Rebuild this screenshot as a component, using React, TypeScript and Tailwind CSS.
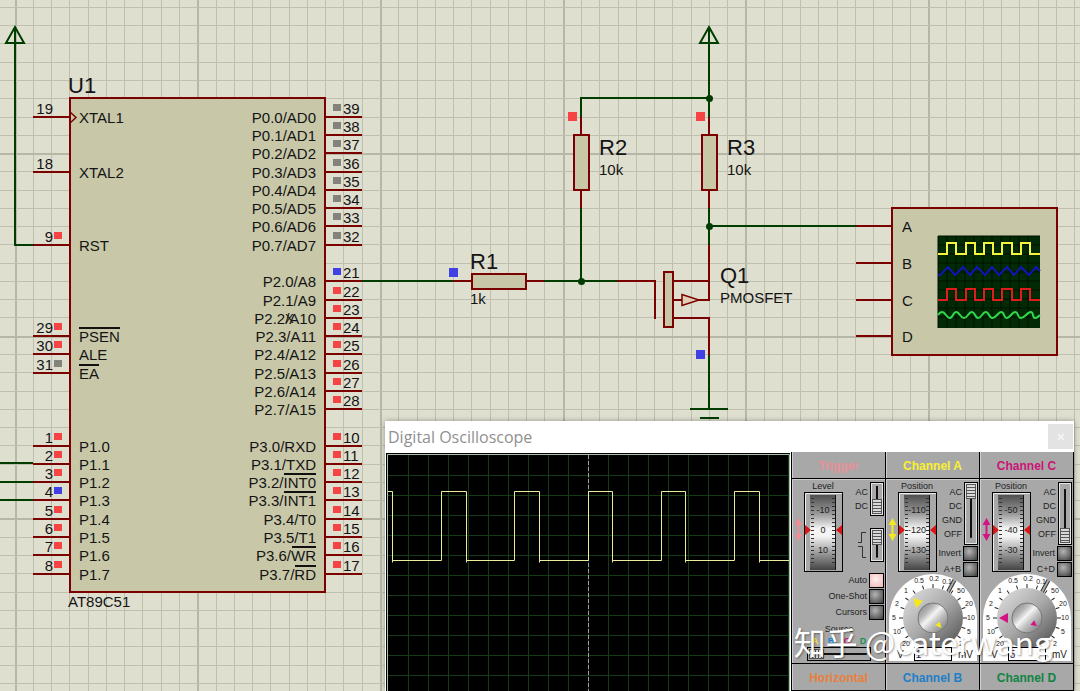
import { ReactNode } from "react";
import { X } from "lucide-react";

type Level = "high" | "low" | "float";
type Pin = { num: number; name: string; row: number; level?: Level; bar?: number };

const WIRE = "#003c00";
const PART = "#7b0000";
const BODY = "#c8c8a9";
const LEVELS: Record<Level, string> = { high: "#f64343", low: "#4040e4", float: "#83837b" };

const LEFT_PINS: Pin[] = [
  { num: 19, name: "XTAL1", row: 0 },
  { num: 18, name: "XTAL2", row: 3 },
  { num: 9, name: "RST", row: 7, level: "high" },
  { num: 29, name: "PSEN", row: 12, level: "high", bar: 41 },
  { num: 30, name: "ALE", row: 13, level: "high" },
  { num: 31, name: "EA", row: 14, level: "float", bar: 20 },
  { num: 1, name: "P1.0", row: 18, level: "high" },
  { num: 2, name: "P1.1", row: 19, level: "high" },
  { num: 3, name: "P1.2", row: 20, level: "high" },
  { num: 4, name: "P1.3", row: 21, level: "low" },
  { num: 5, name: "P1.4", row: 22, level: "high" },
  { num: 6, name: "P1.5", row: 23, level: "high" },
  { num: 7, name: "P1.6", row: 24, level: "high" },
  { num: 8, name: "P1.7", row: 25, level: "high" },
];

const RIGHT_PINS: Pin[] = [
  { num: 39, name: "P0.0/AD0", row: 0, level: "float" },
  { num: 38, name: "P0.1/AD1", row: 1, level: "float" },
  { num: 37, name: "P0.2/AD2", row: 2, level: "float" },
  { num: 36, name: "P0.3/AD3", row: 3, level: "float" },
  { num: 35, name: "P0.4/AD4", row: 4, level: "float" },
  { num: 34, name: "P0.5/AD5", row: 5, level: "float" },
  { num: 33, name: "P0.6/AD6", row: 6, level: "float" },
  { num: 32, name: "P0.7/AD7", row: 7, level: "float" },
  { num: 21, name: "P2.0/A8", row: 9, level: "low" },
  { num: 22, name: "P2.1/A9", row: 10, level: "high" },
  { num: 23, name: "P2.2/A10", row: 11, level: "high" },
  { num: 24, name: "P2.3/A11", row: 12, level: "high" },
  { num: 25, name: "P2.4/A12", row: 13, level: "high" },
  { num: 26, name: "P2.5/A13", row: 14, level: "high" },
  { num: 27, name: "P2.6/A14", row: 15, level: "high" },
  { num: 28, name: "P2.7/A15", row: 16, level: "high" },
  { num: 10, name: "P3.0/RXD", row: 18, level: "high" },
  { num: 11, name: "P3.1/TXD", row: 19, level: "high" },
  { num: 12, name: "P3.2/INT0", row: 20, level: "high", bar: 32 },
  { num: 13, name: "P3.3/INT1", row: 21, level: "high", bar: 32 },
  { num: 14, name: "P3.4/T0", row: 22, level: "high" },
  { num: 15, name: "P3.5/T1", row: 23, level: "high" },
  { num: 16, name: "P3.6/WR", row: 24, level: "high", bar: 24 },
  { num: 17, name: "P3.7/RD", row: 25, level: "high", bar: 21 },
];

const rowY = (row: number) => Math.round(116.8 + row * 18.27);

function GridLines() {
  const columns = Array.from({ length: 140 }, (_, i) => i);
  const rows = Array.from({ length: 90 }, (_, i) => i);
  return (
    <g shapeRendering="crispEdges">
      {columns.map((i) => {
        const major = i % 10 === 0;
        return (
          <rect key={i} x={Math.round(14.6 + i * 18.27)} y="0" width={major ? 2 : 1} height="100%" fill={major ? "#b7b7a8" : "#bfbfb0"} />
        );
      })}
      {rows.map((i) => {
        const major = i % 10 === 8;
        return (
          <rect key={i} x="0" y={Math.round(6.9 + i * 18.27)} width="100%" height={major ? 2 : 1} fill={major ? "#b7b7a8" : "#bfbfb0"} />
        );
      })}
    </g>
  );
}

function Chip() {
  return (
    <g>
      <rect x="70" y="98" width="255" height="494" fill={BODY} stroke={PART} strokeWidth="2" />
      <path d="M70 112l6 5.500-6 5.500" fill="none" stroke={PART} strokeWidth="1.500" />
      {LEFT_PINS.map((pin) => {
        const y = rowY(pin.row);
        return (
          <g key={pin.num}>
            <path d={`M33 ${y}H70`} stroke={PART} strokeWidth="2" />
            <text x="53" y={y - 3} textAnchor="end">{pin.num}</text>
            <text x="79" y={y + 6}>{pin.name}</text>
            {pin.level && <rect x="54" y={y - 13} width="8" height="7" fill={LEVELS[pin.level]} />}
            {pin.bar && <path d={`M79 ${y - 8}h${pin.bar}`} stroke="#111" strokeWidth="2" />}
          </g>
        );
      })}
      {RIGHT_PINS.map((pin) => {
        const y = rowY(pin.row);
        return (
          <g key={pin.num}>
            <path d={`M325 ${y}H362`} stroke={PART} strokeWidth="2" />
            <text x="343" y={y - 3}>{pin.num}</text>
            <text x="316" y={y + 6} textAnchor="end">{pin.name}</text>
            {pin.level && <rect x="333" y={y - 13} width="8" height="7" fill={LEVELS[pin.level]} />}
            {pin.bar && <path d={`M316 ${y - 8}h-${pin.bar}`} stroke="#111" strokeWidth="2" />}
          </g>
        );
      })}
      <text x="285" y="323" className="text-[13px]">X</text>
      <text x="68" y="93" className="text-[22px]">U1</text>
      <text x="68" y="607">AT89C51</text>
    </g>
  );
}

function Wires() {
  return (
    <g>
      <g fill="none" stroke={WIRE} strokeWidth="2">
        <path d="M15 27V245H33M15 27l9 16H6z" />
        <path d="M709 27V117M709 27l9 16h-18z" />
        <path d="M0 463h33M0 482h33M0 500h33" />
        <path d="M362 281h91M544 281h73M581 208v73M581 117V98h128" />
        <path d="M709 208v37M709 226h147M709 355v54M690 409h38M700 418h19" />
      </g>
      <g fill="none" stroke={PART} strokeWidth="2">
        <path d="M453 281h18M526 281h18M617 281h38v38" />
        <path d="M581 117v18M581 190v18M709 117v18M709 190v18" />
        <path d="M709 245v55h-36M673 281h36M673 318h36v37" />
        <path d="M682 294.500v11l17-5.500z" fill="#e2cdb5" strokeWidth="1.500" />
        <g fill={BODY}>
          <rect x="472" y="274" width="54" height="15" />
          <rect x="574" y="135" width="15" height="55" />
          <rect x="702" y="135" width="15" height="55" />
          <rect x="664" y="272" width="9" height="55" />
        </g>
      </g>
      <g fill={WIRE}>
        <circle cx="709.500" cy="98.500" r="3.500" />
        <circle cx="709.500" cy="226.500" r="3.500" />
        <circle cx="581.500" cy="281.500" r="3.500" />
      </g>
      <rect x="568" y="112" width="9" height="9" fill={LEVELS.high} />
      <rect x="696" y="112" width="9" height="9" fill={LEVELS.high} />
      <rect x="449" y="268" width="9" height="9" fill={LEVELS.low} />
      <rect x="696" y="350" width="9" height="9" fill={LEVELS.low} />
      <g className="text-[22px]">
        <text x="599" y="155">R2</text>
        <text x="727" y="155">R3</text>
        <text x="470" y="269">R1</text>
        <text x="720" y="283">Q1</text>
      </g>
      <text x="599" y="175">10k</text>
      <text x="727" y="175">10k</text>
      <text x="470" y="304">1k</text>
      <text x="720" y="303">PMOSFET</text>
    </g>
  );
}

const SQUARE = "h9v-11h9v11h10v-11h9v11h9v-11h9v11h9v-11h10v11h9v-11h9v11h10";
const ZIGZAG = "l2 0 8-8 7 8 8-8 7 8 7-8 8 8 7-8 7 8 8-8 7 8 7-8 8 8 7-8 4 4";
const SINE = "q4-6 8 0t7 0 7 0 8 0 7 0 7 0 7 0 8 0 7 0 7 0 7 0 8 0 7 0 7 0";

function ScopePart() {
  const cells = Array.from({ length: 11 }, (_, i) => 938 + i * 9);
  const lines = Array.from({ length: 10 }, (_, i) => 236 + i * 9);
  return (
    <g>
      <rect x="892" y="208" width="165" height="147" fill={BODY} stroke={PART} strokeWidth="2" />
      {["A", "B", "C", "D"].map((name, i) => (
        <g key={name}>
          <path d={`M856 ${rowY(6 + i * 2)}h36`} stroke={PART} strokeWidth="2" />
          <text x="902" y={rowY(6 + i * 2) + 6}>{name}</text>
        </g>
      ))}
      <rect x="938" y="236" width="102" height="92" fill="#022b05" />
      <g stroke="#001000">
        {cells.map((x) => <path key={x} d={`M${x} 236v92`} />)}
        {lines.map((y) => <path key={y} d={`M938 ${y}h102`} />)}
      </g>
      <g fill="none" strokeWidth="2">
        <path d={`M938 254${SQUARE}`} stroke="#f4f43c" />
        <path d={`M938 275${ZIGZAG}`} stroke="#1414b4" />
        <path d={`M938 300${SQUARE}`} stroke="#e01c1c" />
        <path d={`M938 315${SINE}`} stroke="#30d84c" />
      </g>
    </g>
  );
}

function Schematic() {
  return (
    <svg className="block h-full w-full text-[15px]" fill="#141414" role="img" aria-label="Schematic">
      <GridLines />
      <Chip />
      <Wires />
      <ScopePart />
    </svg>
  );
}

function Plot() {
  const steps = Array.from({ length: 20 }, (_, i) => 22 + i * 20);
  return (
    <svg className="block h-full w-full bg-black" role="img" aria-label="Trace">
      <g stroke="#153a18" shapeRendering="crispEdges">
        {steps.map((x) => <path key={x} d={`M${x}.5 2v800`} />)}
        {steps.map((y) => <path key={y} d={`M2 ${y}.5h401`} />)}
      </g>
      <path d="M202.500 2v800" stroke="#a0a0a0" strokeDasharray="4 2" />
      <path
        d="M2 38.500h4.500v71M6.500 107.500h49v-69h25v71M80.500 107.500h48v-69h25v71M153.500 107.500h49v-69h24v71M226.500 107.500h49v-69h24v71M299.500 107.500h49v-69h25v71M373.500 107.500h30"
        fill="none"
        stroke="#ecec9a"
      />
      <path d="M1.500 900V1.500h402v900" fill="none" stroke="#a9c0a9" />
    </svg>
  );
}

function Wheel({ marks, unit }: { marks: [string, string, string]; unit: string }) {
  const ticks = Array.from({ length: 17 }, (_, i) => 5 + i * 4);
  return (
    <div className="flex w-10 flex-col items-center">
      <span className="h-[13px] leading-[15px]">{unit}</span>
      <svg width="39" height="80" className="block" role="img" aria-label={`${unit} ${marks[1]}`}>
        <defs>
          <linearGradient id="wheel" x1="0" y1="0" x2="0" y2="1">
            <stop offset="0" stopColor="#505050" />
            <stop offset="0.250" stopColor="#999" />
            <stop offset="0.450" stopColor="#f4f4f4" />
            <stop offset="0.550" stopColor="#f4f4f4" />
            <stop offset="0.780" stopColor="#999" />
            <stop offset="1" stopColor="#444" />
          </linearGradient>
        </defs>
        <rect x="0.500" y="0.500" width="38" height="79" fill="#a8a8a8" stroke="#000" />
        <path d="M1.500 79V1.500H38" fill="none" stroke="#eee" />
        <rect x="6" y="3" width="26" height="75" fill="url(#wheel)" />
        <path d="M31.500 3v75" stroke="#111" />
        <g stroke="#333">
          {ticks.map((y) => <path key={y} d={`M7 ${y + 1}.500h3M28 ${y + 1}.500h3`} />)}
        </g>
        <path d="M1 33l6 5-6 5zM38 33l-6 5 6 5z" fill="#dc1414" />
        <g fill="#222" textAnchor="middle" className="text-[9px]">
          <text x="19" y="21">{marks[0]}</text>
          <text x="19" y="41">{marks[1]}</text>
          <text x="19" y="61">{marks[2]}</text>
        </g>
      </svg>
    </div>
  );
}

function DragArrow({ color }: { color: string }) {
  return (
    <svg width="10" height="24" className="mt-[39px] block" fill={color} aria-hidden="true">
      <path d="M5.500 0l4 7h-3v9h3l-4 7-4-7h3V7h-3z" />
    </svg>
  );
}

function Slide({ label, max, value, tall }: { label: string; max: number; value: number; tall?: boolean }) {
  return (
    <input
      type="range"
      aria-label={label}
      min={0}
      max={max}
      defaultValue={value}
      className={`m-0 block w-[14px] appearance-none border border-black bg-[#a8a8a8] bg-[linear-gradient(#111,#111)] bg-[length:2px_80%] bg-center bg-no-repeat p-px outline-1 -outline-offset-2 outline-[#e4e4e4] [writing-mode:vertical-lr] [&::-webkit-slider-thumb]:h-[15px] [&::-webkit-slider-thumb]:w-[10px] [&::-webkit-slider-thumb]:appearance-none [&::-webkit-slider-thumb]:border [&::-webkit-slider-thumb]:border-[#555] [&::-webkit-slider-thumb]:bg-[repeating-linear-gradient(#d8d8d8_0_2px,#555_2px_3px)] ${
        tall ? "h-[63px]" : "h-[34px]"
      }`}
    />
  );
}

function PushButton({ label, lit }: { label: string; lit?: boolean }) {
  return (
    <button type="button" className="flex h-4 items-center justify-end gap-[2px] leading-4">
      {label}
      <span
        className={`h-[15px] w-[15px] border border-black ${
          lit
            ? "bg-[radial-gradient(circle_at_45%_40%,#fff0f0,#f0b4b4)]"
            : "bg-[radial-gradient(circle_at_40%_35%,#b4b4b4,#3c3c3c)]"
        }`}
      />
    </button>
  );
}

function Panel({ title, titleClass, footer, footerClass, children }: { title: string; titleClass: string; footer: string; footerClass: string; children: ReactNode }) {
  return (
    <section className="flex w-[94px] flex-col border-l border-black bg-[#a8a8a8] shadow-[inset_1px_0_#d4ccd8]">
      <h2 className={`h-[27px] border-b border-black text-center text-xs leading-[29px] font-bold ${titleClass}`}>{title}</h2>
      <div className="h-[185px] border-b border-black pl-px shadow-[inset_0_1px_#ccc]">{children}</div>
      <h2 className={`h-[27px] border-b border-black text-center text-xs leading-[28px] font-bold ${footerClass}`}>{footer}</h2>
    </section>
  );
}

const DIAL_MARKS: [string, number, number][] = [
  ["20", -27, 26], ["10", -36, 14], ["5", -39, 0], ["2", -36, -14], ["1", -27, -27], ["0.5", -14, -37], ["0.2", 1, -39],
  ["0.1", 14, -36], ["50", 28, -27], ["20", 36, -14], ["10", 38, 0], ["5", 36, 14], ["2", 28, 26],
];

function Dial({ name, color, angle, fineAngle, value }: { name: string; color: string; angle: number; fineAngle: number; value: string }) {
  const ticks = Array.from({ length: 15 }, (_, i) => -126 + i * 18);
  return (
    <div className="relative -mt-1">
      <svg width="92" height="88" className="block" role="img" aria-label={`${name} volts per division`}>
        <defs>
          <linearGradient id="knob" x1="0" y1="0" x2="1" y2="1">
            <stop offset="0.100" stopColor="#d8d8d8" />
            <stop offset="0.500" stopColor="#a8a8a8" />
            <stop offset="0.900" stopColor="#5c5c5c" />
          </linearGradient>
          <linearGradient id="cap" x1="0" y1="0" x2="1" y2="1">
            <stop offset="0.100" stopColor="#8c8c8c" />
            <stop offset="0.300" stopColor="#b8b8b8" />
            <stop offset="0.450" stopColor="#f4f4f4" />
            <stop offset="0.600" stopColor="#c4c4c4" />
            <stop offset="0.900" stopColor="#808080" />
          </linearGradient>
        </defs>
        <path d="M2 88V45a44 44 0 0 1 88 0v43z" fill="#fff" />
        <g transform="translate(46 45)">
          <path d="M15-26L21.500-38" stroke="#333" strokeWidth="4" />
          <path d="M15-26L22-39" stroke="#a8a8a8" strokeWidth="2" />
          <g stroke="#222">
            {ticks.map((a) => <path key={a} d="M0-30v-4" transform={`rotate(${a})`} />)}
          </g>
          <circle r="30" fill="url(#knob)" />
          <circle r="15" fill="url(#cap)" stroke="#777" />
          <path d="M-5-19h10l-5-9z" fill={color} transform={`rotate(${angle})`} />
          <path d="M-3-7h6l-3-6z" fill={color} transform={`rotate(${fineAngle})`} />
          <g fill="#222" textAnchor="middle" className="text-[7px]">
            {DIAL_MARKS.map(([text, x, y], i) => (
              <text key={i} x={x} y={y + 2}>{text}</text>
            ))}
          </g>
        </g>
      </svg>
      <label className="absolute bottom-0 left-[2px] flex h-[14px] w-[88px] items-center justify-between pr-1 pl-2 text-[10px] text-[#222]">
        V
        <input aria-label={`${name} range`} defaultValue={value} className="ml-1 h-[14px] w-[38px] border border-black bg-white pl-px text-[10px] text-[#1c1c60]" />
        mV
      </label>
    </div>
  );
}

const COUPLING = ["AC", "DC", "GND", "OFF"];

function ChannelBody({ name, color, marks, coupling, sum, angle, fineAngle, value }: { name: string; color: string; marks: [string, string, string]; coupling: number; sum: string; angle: number; fineAngle: number; value: string }) {
  return (
    <>
      <div className="flex h-[98px] pr-px">
        <DragArrow color={color} />
        <Wheel unit="Position" marks={marks} />
        <div className="flex flex-1 flex-col items-end pt-[3px]">
          <div className="flex gap-[2px]">
            <div className="pt-[3px] text-right leading-[14px]">
              {COUPLING.map((c) => <p key={c}>{c}</p>)}
            </div>
            <Slide label={`${name} coupling`} max={3} value={coupling} tall />
          </div>
          <PushButton label="Invert" />
          <PushButton label={sum} />
        </div>
      </div>
      <Dial name={name} color={color} angle={angle} fineAngle={fineAngle} value={value} />
    </>
  );
}

function TriggerBody() {
  return (
    <div className="flex flex-col pr-px">
      <div className="flex h-[93px]">
        <DragArrow color="#f08c94" />
        <Wheel unit="Level" marks={["-10", "0", "10"]} />
        <div className="flex flex-1 flex-col items-end gap-3 pt-[3px]">
          <div className="flex gap-[2px]">
            <div className="pt-[3px] text-right leading-[14px]">
              <p>AC</p>
              <p>DC</p>
            </div>
            <Slide label="Trigger coupling" max={1} value={1} />
          </div>
          <div className="flex gap-1">
            <svg width="8" height="34" className="block" fill="none" stroke="#333" aria-hidden="true">
              <path d="M0 14.500h3.500v-10H8M0 18.500h4.500v11H8" />
            </svg>
            <Slide label="Trigger edge" max={1} value={0} />
          </div>
        </div>
      </div>
      <div className="flex flex-col items-end">
        <PushButton label="Auto" lit />
        <PushButton label="One-Shot" />
        <PushButton label="Cursors" />
      </div>
      <div className="ml-[14px] w-[64px] pt-[3px]">
        <p className="text-center leading-[12px]">Source</p>
        <p className="flex justify-around leading-[12px] font-bold">
          <span className="text-[#f4e81c]">A</span>
          <span className="text-[#1c84cc]">B</span>
          <span className="text-[#cc1478]">C</span>
          <span className="text-[#14944c]">D</span>
        </p>
        <input
          type="range"
          aria-label="Trigger source"
          min={0}
          max={3}
          defaultValue={0}
          className="m-0 block h-[14px] w-full appearance-none border border-black bg-[#a8a8a8] bg-[linear-gradient(#111,#111)] bg-[length:90%_2px] bg-center bg-no-repeat p-px [&::-webkit-slider-thumb]:h-[10px] [&::-webkit-slider-thumb]:w-[15px] [&::-webkit-slider-thumb]:appearance-none [&::-webkit-slider-thumb]:border [&::-webkit-slider-thumb]:border-[#555] [&::-webkit-slider-thumb]:bg-[repeating-linear-gradient(90deg,#d8d8d8_0_2px,#555_2px_3px)]"
        />
      </div>
    </div>
  );
}

function OscilloscopeWindow() {
  return (
    <div className="absolute top-[421px] bottom-0 left-[385px] flex w-[689px] flex-col bg-white shadow-[0_0_5px_rgba(0,0,0,0.35)]">
      <header className="flex h-[31px] shrink-0 items-center justify-between pl-[3px]">
        <h1 className="font-['Open_Sans','Noto_Sans',sans-serif] text-base text-[#909090]">Digital Oscilloscope</h1>
        <button type="button" aria-label="Close" className="mr-px flex h-[25px] w-[25px] items-center justify-center bg-[#e3e3e3] text-[#f6f6f6]">
          <X size={10} strokeWidth={4} />
        </button>
      </header>
      <div className="flex min-h-0 flex-1 text-[9px] text-[#222]">
        <div className="min-w-0 flex-1 pt-px pr-px pl-px">
          <Plot />
        </div>
        <div className="flex items-start overflow-hidden border-r border-black">
          <Panel title="Trigger" titleClass="text-[#e89098]" footer="Horizontal" footerClass="text-[#e8803c]">
            <TriggerBody />
          </Panel>
          <Panel title="Channel A" titleClass="text-[#f8f030]" footer="Channel B" footerClass="text-[#1c80c8]">
            <ChannelBody name="Channel A" color="#f4e81c" marks={["-110", "-120", "-130"]} coupling={0} sum="A+B" angle={-45} fineAngle={140} value="1" />
          </Panel>
          <Panel title="Channel C" titleClass="text-[#cc1478]" footer="Channel D" footerClass="text-[#108444]">
            <ChannelBody name="Channel C" color="#d41484" marks={["-50", "-40", "-30"]} coupling={3} sum="C+D" angle={-90} fineAngle={130} value="5" />
          </Panel>
        </div>
      </div>
    </div>
  );
}

export default function App() {
  return (
    <main className="relative h-screen w-full overflow-hidden bg-[#dfdfd0] font-['Liberation_Sans',Arial,sans-serif]">
      <Schematic />
      <OscilloscopeWindow />
      <p className="pointer-events-none absolute right-[28px] bottom-[26px] font-['Noto_Sans_CJK_SC',sans-serif] text-[32px] leading-[48px] whitespace-nowrap text-white [text-shadow:1px_1px_2px_rgba(0,0,0,0.4)]">
        知乎 @caterwang
      </p>
    </main>
  );
}
